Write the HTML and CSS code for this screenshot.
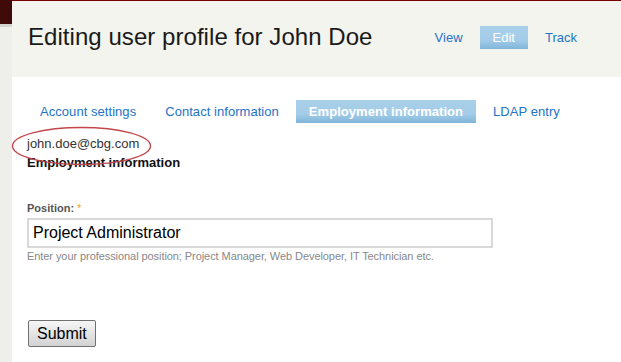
FILE: index.html
```html
<!DOCTYPE html>
<html lang="en">
<head>
<meta charset="utf-8">
<title>Editing user profile for John Doe</title>
<link rel="stylesheet" href="styles.css">
</head>
<body>
<div class="page">
  <aside class="side">
    <div class="side-top"></div>
    <div class="side-rule"></div>
  </aside>
  <main class="main">
    <header class="head">
      <h1 class="title">Editing user profile for John Doe</h1>
      <nav class="tabs">
        <a class="tab" href="#">View</a>
        <a class="tab active" href="#">Edit</a>
        <a class="tab" href="#">Track</a>
      </nav>
    </header>
    <div class="content">
      <nav class="subtabs">
        <a class="subtab" href="#">Account settings</a>
        <a class="subtab" href="#">Contact information</a>
        <a class="subtab active" href="#">Employment information</a>
        <a class="subtab" href="#">LDAP entry</a>
      </nav>
      <div class="email">john.doe@cbg.com<svg class="circle" width="141" height="40" viewBox="0 0 141 40"><ellipse cx="70.5" cy="20" rx="69" ry="18.5" fill="none" stroke="#c2474b" stroke-width="1.4"/></svg></div>
      <h2 class="section">Employment information</h2>
      <div class="field">
        <label class="label" for="position">Position: <span class="req">*</span></label>
        <input class="input" id="position" type="text" value="Project Administrator">
        <div class="desc">Enter your professional position; Project Manager, Web Developer, IT Technician etc.</div>
      </div>
      <button class="submit" type="button">Submit</button>
    </div>
  </main>
</div>
</body>
</html>
```
FILE: styles.css
```css
html, body {
  margin: 0;
  padding: 0;
  background: #ffffff;
}
body {
  font-family: "Liberation Sans", Arial, sans-serif;
  color: #000;
}
.page {
  display: flex;
  min-height: 362px;
}
.side {
  width: 12px;
  flex: none;
  background: #eeeeea;
}
.side-top {
  height: 24px;
  background: #3e0a0a;
}
.side-rule {
  height: 3px;
  background: #d3d3d1;
}
.main {
  flex: 1;
  min-width: 0;
}
.head {
  height: 77px;
  box-sizing: border-box;
  border-top: 1px solid #7a0000;
  background: #f4f4ef;
  display: flex;
  align-items: center;
  justify-content: space-between;
  padding: 0 31px 4px 16px;
}
.title {
  margin: 0;
  font-size: 24px;
  line-height: 28px;
  font-weight: normal;
  color: #1a1a1a;
  letter-spacing: 0.05px;
}
.tabs {
  display: flex;
  gap: 4px;
}
.tab {
  display: block;
  height: 23px;
  line-height: 23px;
  padding: 0 13px;
  font-size: 13px;
  color: #2373c8;
  text-decoration: none;
}
.tab.active,
.subtab.active {
  color: #fff;
  background: linear-gradient(#a9d0ea 0%, #a4cce8 60%, #80b5da 100%);
}
.content {
  padding: 23px 0 0 15px;
}
.subtabs {
  display: flex;
  gap: 5px;
  margin-left: 1px;
}
.subtab {
  display: block;
  height: 23px;
  line-height: 23px;
  padding: 0 12px;
  font-size: 13px;
  letter-spacing: 0.05px;
  color: #2373c8;
  text-decoration: none;
}
.subtab.active {
  font-weight: bold;
  padding: 0 13px;
}
.email {
  position: relative;
  margin-top: 13px;
  font-size: 13px;
  line-height: 16px;
  color: #333;
  width: max-content;
}
.circle {
  position: absolute;
  left: -16px;
  top: -10px;
}
.section {
  margin: 3px 0 0;
  font-size: 13px;
  line-height: 16px;
  font-weight: bold;
  color: #111;
}
.field {
  margin-top: 30px;
}
.label {
  display: block;
  font-size: 11px;
  line-height: 14px;
  font-weight: bold;
  color: #555;
}
.req {
  color: #f0a020;
  font-weight: normal;
}
.input {
  display: block;
  margin: 3px 0 0;
  width: 466px;
  height: 30px;
  box-sizing: border-box;
  border: 2px solid #d9d9d9;
  padding: 0 4px;
  font-family: "Liberation Sans", Arial, sans-serif;
  font-size: 16px;
  color: #000;
  background: #fff;
  outline: none;
}
.desc {
  margin-top: 1px;
  font-size: 11px;
  line-height: 14px;
  letter-spacing: -0.07px;
  color: #888;
}
.submit {
  display: block;
  margin: 57px 0 0 1px;
  height: 27px;
  padding: 0 8px;
  border: 1px solid #707070;
  border-radius: 2px;
  background: linear-gradient(#f7f7f7, #e4e4e4 50%, #d2d2d2);
  font-family: "Liberation Sans", Arial, sans-serif;
  font-size: 16px;
  color: #000;
}
```
